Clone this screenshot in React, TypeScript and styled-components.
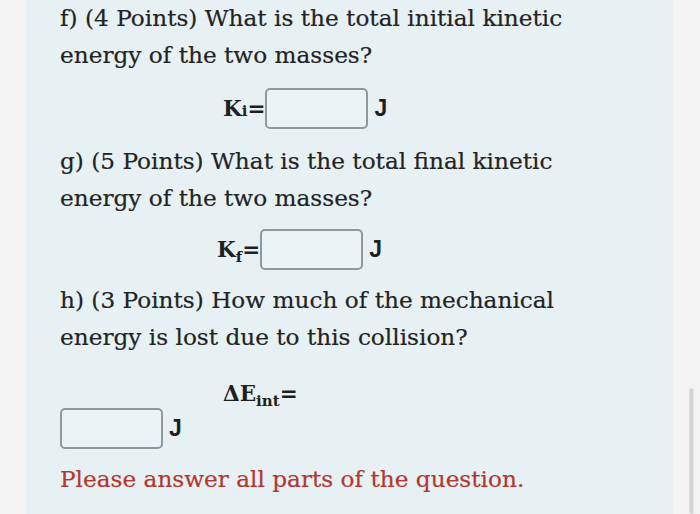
import React from "react";
import styled, { createGlobalStyle } from "styled-components";

const Global = createGlobalStyle`
  html, body { margin: 0; padding: 0; }
  body {
    background: #f3f3f3;
    width: 700px;
    height: 514px;
    overflow: hidden;
    font-family: "DejaVu Serif", "Liberation Serif", serif;
  }
`;

const Page = styled.div`
  position: relative;
  width: 700px;
  height: 514px;
  display: flex;
`;

const Panel = styled.div`
  margin-left: 26px;
  width: 647px;
  height: 514px;
  background: #e7f1f4;
  box-sizing: border-box;
  padding: 0 0 0 34px;
  display: flex;
  flex-direction: column;
  color: #232323;
`;

const Question = styled.p<{ $top: number }>`
  margin: ${(p) => p.$top}px 0 0 0;
  font-size: 23.2px;
  line-height: 37px;
  -webkit-text-stroke: 0.2px currentColor;
`;

const AnswerRow = styled.div<{ $top: number; $indent: number }>`
  margin: ${(p) => p.$top}px 0 0 ${(p) => p.$indent}px;
  display: flex;
  align-items: center;
  height: 41px;
`;

const Label = styled.span`
  font-weight: 700;
  font-size: 21.5px;
  color: #1f1f1f;
  display: inline-flex;
  align-items: baseline;
`;

const Sub = styled.span<{ $drop: number }>`
  font-size: 15px;
  position: relative;
  top: ${(p) => p.$drop}px;
`;

const Box = styled.div`
  width: 99px;
  height: 37px;
  border: 2px solid #8c9a9f;
  border-radius: 5px;
  background: #eaf3f6;
`;

const Unit = styled.span`
  font-family: "Liberation Sans", Arial, sans-serif;
  font-weight: 700;
  font-size: 23px;
  color: #1f1f1f;
  margin-left: 6px;
`;

const DeltaLine = styled.div`
  margin: 23px 0 0 163px;
  height: 30px;
  display: flex;
  align-items: center;
`;

const Warning = styled.p`
  margin: 11px 0 0 0;
  font-size: 23.2px;
  line-height: 37px;
  color: #b3372f;
  -webkit-text-stroke: 0.2px currentColor;
`;

const Thumb = styled.div`
  position: absolute;
  left: 689px;
  top: 388px;
  width: 5px;
  height: 126px;
  background: #d3d3d3;
  border: 1px solid #e2e2e2;
  box-sizing: border-box;
  border-radius: 2px;
`;

export default function App() {
  return (
    <>
      <Global />
      <Page>
        <Panel>
          <Question $top={-1}>
            f) (4 Points) What is the total initial kinetic
            <br />
            energy of the two masses?
          </Question>
          <AnswerRow $top={15} $indent={163}>
            <Label>
              K<Sub $drop={0}>i</Sub>=
            </Label>
            <Box />
            <Unit>J</Unit>
          </AnswerRow>
          <Question $top={13}>
            g) (5 Points) What is the total final kinetic
            <br />
            energy of the two masses?
          </Question>
          <AnswerRow $top={13} $indent={157}>
            <Label>
              K<Sub $drop={5}>f</Sub>=
            </Label>
            <Box />
            <Unit>J</Unit>
          </AnswerRow>
          <Question $top={11}>
            h) (3 Points) How much of the mechanical
            <br />
            energy is lost due to this collision?
          </Question>
          <DeltaLine>
            <Label>
              ΔE<Sub $drop={5}>int</Sub>=
            </Label>
          </DeltaLine>
          <AnswerRow $top={0} $indent={0}>
            <Box />
            <Unit>J</Unit>
          </AnswerRow>
          <Warning>Please answer all parts of the question.</Warning>
        </Panel>
        <Thumb />
      </Page>
    </>
  );
}
